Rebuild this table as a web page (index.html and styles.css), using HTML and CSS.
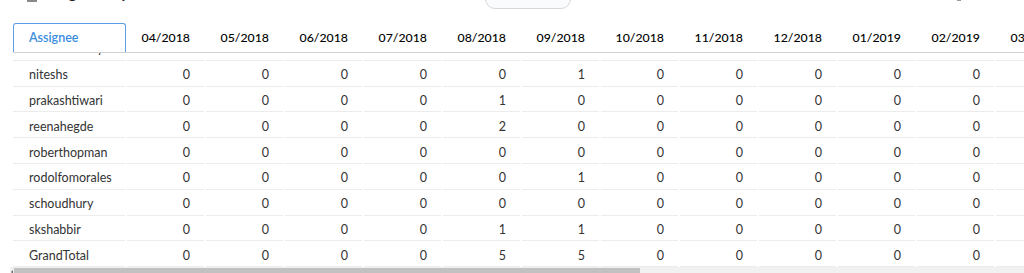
FILE: index.html
```html
<!DOCTYPE html>
<html lang="en">
<head>
<meta charset="utf-8">
<title>Assignee Report</title>
<link rel="stylesheet" href="styles.css">
</head>
<body>
<div class="page">
  <div class="toolbar">
    <span class="tb-icon"></span>
    <span class="tb-title">Assignee Report</span>
    <span class="tb-search"><svg width="10" height="10" viewBox="0 0 10 10"><circle cx="4" cy="4" r="3" fill="none" stroke="#9a9fa6" stroke-width="1.4"/></svg></span>
    <span class="tb-gear"></span>
  </div>
  <div class="report">
    <div class="grid head">
      <div class="hcell first">Assignee</div>
      <div class="hcell">04/2018</div><div class="hcell">05/2018</div><div class="hcell">06/2018</div>
      <div class="hcell">07/2018</div><div class="hcell">08/2018</div><div class="hcell">09/2018</div>
      <div class="hcell">10/2018</div><div class="hcell">11/2018</div><div class="hcell">12/2018</div>
      <div class="hcell">01/2019</div><div class="hcell">02/2019</div><div class="hcell">03/2019</div>
    </div>
    <div class="body">
      <div class="rows">
        <div class="grid row"><div class="name">mohan.shetty</div><div>0</div><div>0</div><div>0</div><div>0</div><div>0</div><div>0</div><div>0</div><div>0</div><div>0</div><div>0</div><div>0</div><div>0</div></div>
        <div class="grid row"><div class="name">niteshs</div><div>0</div><div>0</div><div>0</div><div>0</div><div>0</div><div>1</div><div>0</div><div>0</div><div>0</div><div>0</div><div>0</div><div>0</div></div>
        <div class="grid row"><div class="name">prakashtiwari</div><div>0</div><div>0</div><div>0</div><div>0</div><div>1</div><div>0</div><div>0</div><div>0</div><div>0</div><div>0</div><div>0</div><div>0</div></div>
        <div class="grid row"><div class="name">reenahegde</div><div>0</div><div>0</div><div>0</div><div>0</div><div>2</div><div>0</div><div>0</div><div>0</div><div>0</div><div>0</div><div>0</div><div>0</div></div>
        <div class="grid row"><div class="name">roberthopman</div><div>0</div><div>0</div><div>0</div><div>0</div><div>0</div><div>0</div><div>0</div><div>0</div><div>0</div><div>0</div><div>0</div><div>0</div></div>
        <div class="grid row"><div class="name">rodolfomorales</div><div>0</div><div>0</div><div>0</div><div>0</div><div>0</div><div>1</div><div>0</div><div>0</div><div>0</div><div>0</div><div>0</div><div>0</div></div>
        <div class="grid row"><div class="name">schoudhury</div><div>0</div><div>0</div><div>0</div><div>0</div><div>0</div><div>0</div><div>0</div><div>0</div><div>0</div><div>0</div><div>0</div><div>0</div></div>
        <div class="grid row"><div class="name">skshabbir</div><div>0</div><div>0</div><div>0</div><div>0</div><div>1</div><div>1</div><div>0</div><div>0</div><div>0</div><div>0</div><div>0</div><div>0</div></div>
        <div class="grid row"><div class="name">GrandTotal</div><div>0</div><div>0</div><div>0</div><div>0</div><div>5</div><div>5</div><div>0</div><div>0</div><div>0</div><div>0</div><div>0</div><div>0</div></div>
      </div>
    </div>
    <div class="scrollbar">
      <span class="arrow"></span>
      <div class="thumb"></div>
    </div>
  </div>
</div>
</body>
</html>
```

FILE: styles.css
```css
html, body {
  margin: 0;
  padding: 0;
  background: #ffffff;
}
body {
  font-family: Lato, "Open Sans", "Liberation Sans", sans-serif;
  color: #333333;
  width: 1024px;
  height: 273px;
  overflow: hidden;
}
.page {
  display: flex;
  flex-direction: column;
  height: 273px;
  overflow: hidden;
}
.toolbar {
  height: 10px;
  flex: none;
  display: flex;
  align-items: flex-end;
  overflow: hidden;
}
.tb-icon {
  width: 10px;
  height: 14px;
  background: #8a8a8a;
  margin-left: 27px;
  margin-bottom: 8px;
  flex: none;
}
.tb-title {
  margin-left: 4px;
  font-size: 15px;
  font-weight: 700;
  line-height: 18px;
  height: 18px;
  color: #222222;
  margin-bottom: 9px;
  flex: none;
}
.tb-search {
  margin-left: 335px;
  width: 86px;
  height: 30px;
  border: 1px solid #d6d8dc;
  border-radius: 10px;
  background: #fafbfc;
  margin-bottom: 1px;
  display: flex;
  align-items: flex-end;
  padding-left: 15px;
  padding-bottom: 7px;
  box-sizing: border-box;
  flex: none;
}
.tb-gear {
  width: 4px;
  height: 10px;
  background: #9a9a9a;
  margin-left: 386px;
  margin-bottom: 9px;
  flex: none;
}
.report {
  margin-top: 13px;
  margin-left: 10px;
  display: flex;
  flex-direction: column;
  flex: 1;
  min-height: 0;
  overflow: hidden;
}
.grid {
  display: grid;
  grid-template-columns: 112px repeat(12, 77px);
  column-gap: 2px;
  margin-left: 3px;
}
.head {
  height: 30px;
  border-bottom: 1px solid #cfd1d4;
  column-gap: 0;
  grid-template-columns: 113px repeat(12, 79px);
  box-sizing: border-box;
  flex: none;
}
.hcell {
  font-size: 12.3px;
  font-weight: 500;
  color: #000000;
  text-align: right;
  padding-right: 15px;
  line-height: 28px;
  padding-top: 1px;
}
.hcell.first {
  color: #3a8ddf;
  font-size: 12.5px;
  font-weight: 600;
  text-align: left;
  padding-left: 15px;
  padding-right: 0;
  border: 1px solid #5c9fe6;
  border-bottom: none;
  border-radius: 3px 3px 0 0;
  padding-top: 0;
}
.body {
  height: 214px;
  overflow: hidden;
  flex: none;
}
.rows {
  margin-top: -18px;
}
.row {
  height: 25.8px;
  font-size: 12.5px;
  color: #333333;
}
.row > div {
  border-bottom: 1px solid #ececec;
  text-align: right;
  padding-right: 14px;
  padding-top: 3px;
  display: flex;
  align-items: center;
  justify-content: flex-end;
}
.row > .name {
  justify-content: flex-start;
  padding-left: 16px;
  padding-right: 0;
}
.scrollbar {
  height: 12px;
  background: #f1f1f1;
  display: flex;
  align-items: flex-start;
  flex: none;
}
.arrow {
  width: 0;
  height: 0;
  margin-top: 3px;
  margin-left: 1px;
  border-top: 2px solid transparent;
  border-bottom: 2px solid transparent;
  border-right: 2px solid #6a6a6a;
}
.thumb {
  margin-left: 1px;
  margin-top: 1px;
  width: 626px;
  height: 9px;
  background: #c1c1c1;
}
```
